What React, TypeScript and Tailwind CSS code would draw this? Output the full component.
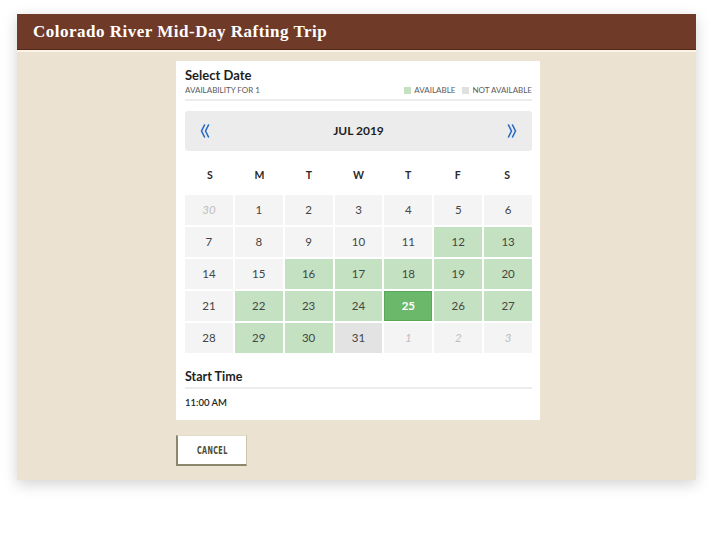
import React from "react";

type Cell = { d: number; kind: "out" | "plain" | "avail" | "sel" | "na" };

const WEEKDAYS = ["S", "M", "T", "W", "T", "F", "S"];

const AVAILABLE = new Set([12, 13, 16, 17, 18, 19, 20, 22, 23, 24, 26, 27, 29, 30]);

function buildMonth(): Cell[] {
  const cells: Cell[] = [{ d: 30, kind: "out" }];
  for (let d = 1; d <= 31; d++) {
    let kind: Cell["kind"] = "plain";
    if (d === 25) kind = "sel";
    else if (d === 31) kind = "na";
    else if (AVAILABLE.has(d)) kind = "avail";
    cells.push({ d, kind });
  }
  cells.push({ d: 1, kind: "out" }, { d: 2, kind: "out" }, { d: 3, kind: "out" });
  return cells;
}

const cellClass: Record<Cell["kind"], string> = {
  out: "bg-[#f4f4f4] text-[#bdbdbd] italic",
  plain: "bg-[#f4f4f4] text-[#454545]",
  avail: "bg-[#c4e2c1] text-[#454545]",
  sel: "bg-[#6cb86a] text-white font-bold border border-[#5aa858]",
  na: "bg-[#e3e3e3] text-[#454545]",
};

function Chevrons({ dir }: { dir: "left" | "right" }) {
  const d =
    dir === "left"
      ? "M4.5 1 L1.5 7 L4.5 13 M8.5 1 L5.5 7 L8.5 13"
      : "M1.5 1 L4.5 7 L1.5 13 M5.5 1 L8.5 7 L5.5 13";
  return (
    <svg width="10" height="14" viewBox="0 0 10 14" fill="none">
      <path d={d} stroke="#2469c6" strokeWidth="1.6" strokeLinecap="round" strokeLinejoin="round" />
    </svg>
  );
}

export default function App() {
  const cells = buildMonth();
  return (
    <div className="min-h-[547px] w-[716px] bg-white pt-[14px] pl-[17px]">
      <div className="flex h-[466px] w-[679px] flex-col bg-[#ebe2d2] shadow-[0_4px_14px_rgba(0,0,0,0.18)]">
        {/* header */}
        <div className="flex h-[35px] items-center bg-[#6f3a27] pl-[16px]">
          <span
            className="text-[17px] font-bold tracking-[0.5px] text-white"
            style={{ fontFamily: '"Liberation Serif", "DejaVu Serif", serif' }}
          >
            Colorado River Mid-Day Rafting Trip
          </span>
        </div>
        <div className="h-px bg-[#55291a]" />
        <div className="h-[2px] bg-[#fbf3e4]" />

        {/* body */}
        <div className="pl-[159px] pt-[9px]">
          <div
            className="flex h-[359px] w-[364px] flex-col bg-white pl-[9px] pr-[8px] pt-[6px]"
            style={{ fontFamily: 'Lato, "Open Sans", sans-serif' }}
          >
            <div className="text-[13px] font-bold leading-[16px] text-[#1e1e1e]">Select Date</div>
            <div className="mt-[2px] flex items-center justify-between text-[8px] leading-[10px] text-[#5a5a5a]">
              <span>AVAILABILITY FOR 1</span>
              <div className="flex items-center gap-[7px]">
                <span className="flex items-center gap-[3px]">
                  <span className="h-[7px] w-[7px] bg-[#c4e2c1]" />
                  AVAILABLE
                </span>
                <span className="flex items-center gap-[3px]">
                  <span className="h-[7px] w-[7px] bg-[#e0e0e0]" />
                  NOT AVAILABLE
                </span>
              </div>
            </div>
            <div className="mt-[4px] h-[2px] bg-[#ececec]" />

            {/* month bar */}
            <div className="mt-[10px] flex h-[40px] items-center justify-between rounded-[3px] bg-[#ececec] px-[15px]">
              <Chevrons dir="left" />
              <span className="text-[12px] font-bold text-[#1e1e1e]">JUL 2019</span>
              <Chevrons dir="right" />
            </div>

            {/* weekday headers */}
            <div className="mt-[15px] grid h-[20px] grid-cols-7 items-center text-center text-[10.5px] font-bold text-[#2a2a2a]">
              {WEEKDAYS.map((w, i) => (
                <span key={i}>{w}</span>
              ))}
            </div>

            {/* day grid */}
            <div className="mt-[9px] grid grid-cols-7 gap-[2px]">
              {cells.map((c, i) => (
                <div
                  key={i}
                  className={`flex h-[30px] items-center justify-center text-[11.5px] ${cellClass[c.kind]}`}
                >
                  {c.d}
                </div>
              ))}
            </div>

            <div className="mt-[16px] text-[12.5px] font-bold leading-[16px] text-[#1e1e1e]">Start Time</div>
            <div className="mt-[2px] h-[2px] bg-[#ececec]" />
            <div className="mt-[7px] text-[9.5px] font-semibold text-[#222]">11:00 AM</div>
          </div>

          {/* cancel */}
          <button className="mt-[15px] flex h-[31px] w-[71px] items-center justify-center border-t border-r border-b-2 border-l-2 border-t-[#e3ddc8] border-r-[#c9c4ae] border-b-[#8b876c] border-l-[#8b876c] bg-white">
            <span
              className="inline-block scale-x-[0.72] text-[10px] font-bold tracking-[0.5px] text-[#4d4b33]"
              style={{ fontFamily: '"DejaVu Sans Condensed", "Liberation Sans", sans-serif' }}
            >
              CANCEL
            </span>
          </button>
        </div>
      </div>
    </div>
  );
}
